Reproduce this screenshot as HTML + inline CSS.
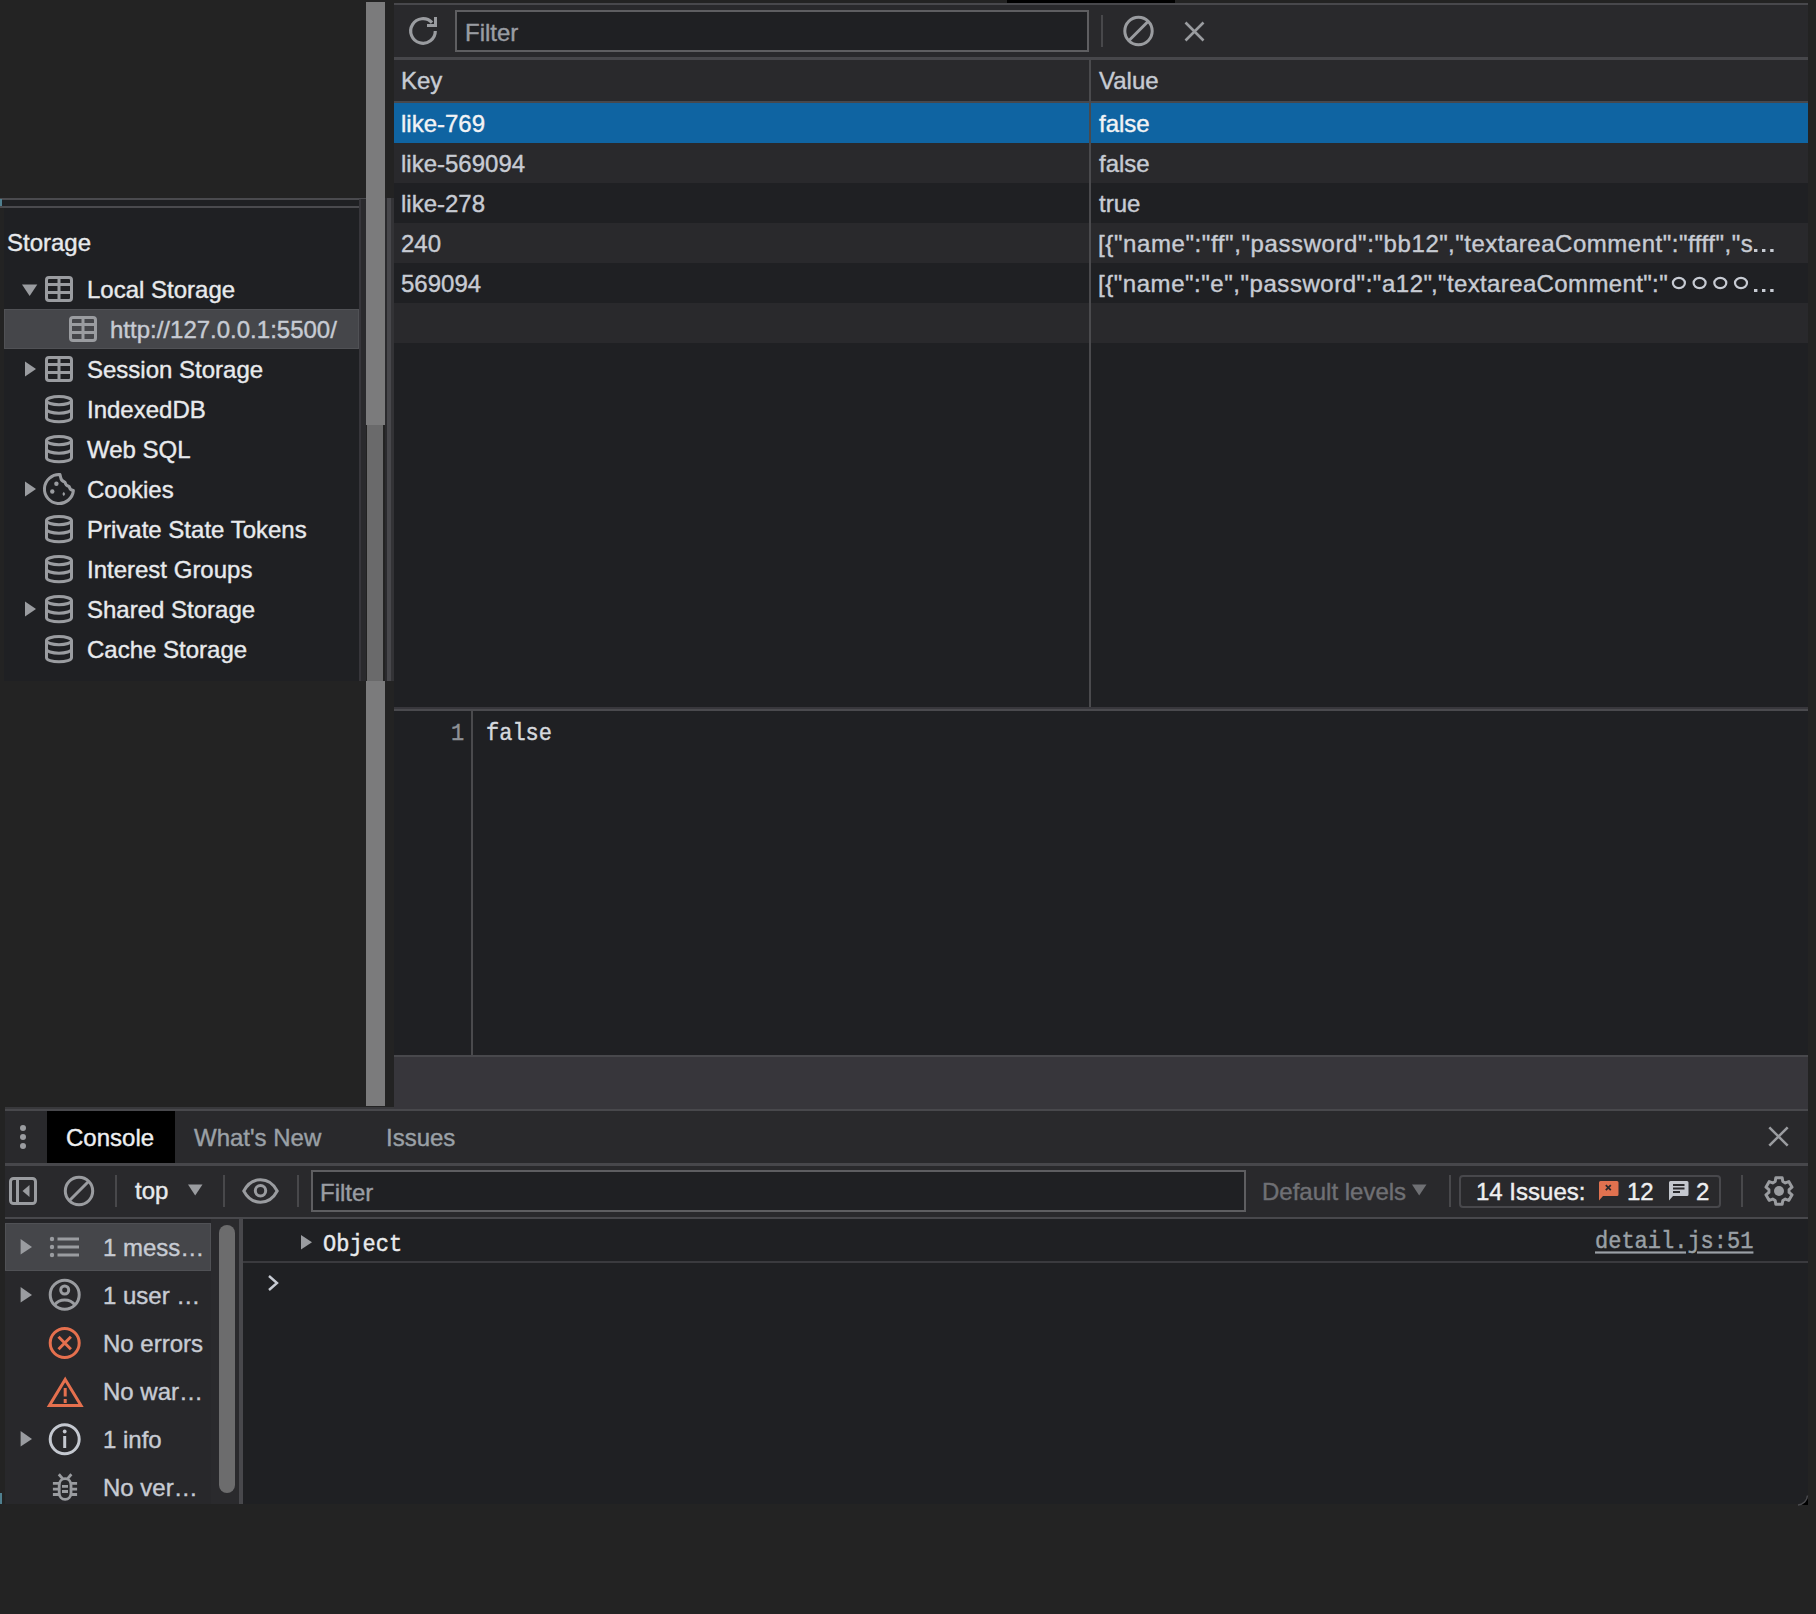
<!DOCTYPE html>
<html><head><meta charset="utf-8">
<style>
*{margin:0;padding:0;box-sizing:border-box}
html,body{width:1816px;height:1614px;overflow:hidden;background:#232323}
body{position:relative;font-family:"Liberation Sans",sans-serif;font-size:24px;color:#c7cbd3}
.a{position:absolute}
.mono{font-family:"Liberation Mono",monospace}
.t{position:absolute;white-space:pre;line-height:28px;margin-top:1px;-webkit-text-stroke:0.4px currentColor}
.mono{margin-top:0;transform:scaleY(1.1);transform-origin:0 18px}
svg{position:absolute;overflow:visible}
</style></head><body>

<!-- ===== top-left storage sidebar ===== -->
<div class="a" style="left:0;top:198px;width:366px;height:2px;background:#4a4a4e"></div>
<div class="a" style="left:0;top:200px;width:359px;height:6px;background:#1f2023"></div>
<div class="a" style="left:0;top:199px;width:2px;height:8px;background:#4f7f8f"></div>
<div class="a" style="left:0;top:206px;width:359px;height:2px;background:#4a4a4e"></div>
<div class="a" style="left:4px;top:208px;width:355px;height:473px;background:#1f2023"></div>
<!-- sidebar right strip -->
<div class="a" style="left:359px;top:199px;width:7px;height:482px;background:#2a2a2d"></div>
<div class="a" style="left:359px;top:199px;width:2px;height:482px;background:#37363b"></div>
<div class="a" style="left:385px;top:198px;width:9px;height:483px;background:#2a2a2d"></div>
<div class="a" style="left:387px;top:198px;width:4px;height:483px;background:#47474b"></div>
<div class="a" style="left:391px;top:198px;width:3px;height:483px;background:#333336"></div>

<!-- scrollbar -->
<div class="a" style="left:366px;top:2px;width:19px;height:423px;background:#7b7b7c"></div>
<div class="a" style="left:367px;top:425px;width:16px;height:256px;background:#6a6a6b"></div>
<div class="a" style="left:366px;top:681px;width:19px;height:425px;background:#7b7b7c"></div>

<div class="t" style="left:7px;top:228px;color:#e8eaed">Storage</div>

<div class="a" style="left:4px;top:309px;width:355px;height:40px;background:#45464a;box-shadow:inset 0 0 0 1px #505155"></div>
<svg style="left:0;top:0" width="1" height="1"><path d="M22 284.5L37.3 284.5L29.65 296Z" fill="#9a9ca0"/></svg>
<svg style="left:45px;top:276px" width="28" height="26" viewBox="0 0 28 26"><rect x="1.5" y="1.5" width="25" height="23" rx="2.5" fill="none" stroke="#9a9ca0" stroke-width="3"/><path d="M14 2V24M2 8.6H26M2 16.6H26" stroke="#9a9ca0" stroke-width="3"/></svg>
<div class="t" style="left:87px;top:275px;color:#e8eaed">Local Storage</div>
<svg style="left:69px;top:316px" width="28" height="26" viewBox="0 0 28 26"><rect x="1.5" y="1.5" width="25" height="23" rx="2.5" fill="none" stroke="#9a9ca0" stroke-width="3"/><path d="M14 2V24M2 8.6H26M2 16.6H26" stroke="#9a9ca0" stroke-width="3"/></svg>
<div class="t" style="left:110px;top:315px;color:#c7cbd3">http://127.0.0.1:5500/</div>
<svg style="left:0;top:0" width="1" height="1"><path d="M25 361.5L36 369.0L25 376.5Z" fill="#9a9ca0"/></svg>
<svg style="left:45px;top:356px" width="28" height="26" viewBox="0 0 28 26"><rect x="1.5" y="1.5" width="25" height="23" rx="2.5" fill="none" stroke="#9a9ca0" stroke-width="3"/><path d="M14 2V24M2 8.6H26M2 16.6H26" stroke="#9a9ca0" stroke-width="3"/></svg>
<div class="t" style="left:87px;top:355px;color:#e8eaed">Session Storage</div>
<svg style="left:45px;top:395px" width="28" height="28" viewBox="0 0 28 28"><ellipse cx="14" cy="5.6" rx="12.5" ry="4.1" fill="none" stroke="#9a9ca0" stroke-width="3"/><path d="M1.5 5.6V22.7A12.5 4.1 0 0 0 26.5 22.7V5.6M1.5 14.1A12.5 4.1 0 0 0 26.5 14.1" fill="none" stroke="#9a9ca0" stroke-width="3"/></svg>
<div class="t" style="left:87px;top:395px;color:#e8eaed">IndexedDB</div>
<svg style="left:45px;top:435px" width="28" height="28" viewBox="0 0 28 28"><ellipse cx="14" cy="5.6" rx="12.5" ry="4.1" fill="none" stroke="#9a9ca0" stroke-width="3"/><path d="M1.5 5.6V22.7A12.5 4.1 0 0 0 26.5 22.7V5.6M1.5 14.1A12.5 4.1 0 0 0 26.5 14.1" fill="none" stroke="#9a9ca0" stroke-width="3"/></svg>
<div class="t" style="left:87px;top:435px;color:#e8eaed">Web SQL</div>
<svg style="left:0;top:0" width="1" height="1"><path d="M25 481.5L36 489.0L25 496.5Z" fill="#9a9ca0"/></svg>
<svg style="left:43px;top:473px" width="32" height="32" viewBox="0 0 32 32"><path d="M17 1.6A14.5 14.5 0 1 0 30.4 17.5C28.2 17.2 26.6 15.6 26.2 13.4C24 13 22.3 11.3 22 9.1C19.7 8.6 17.9 6.6 17.6 4.1Z" fill="none" stroke="#9a9ca0" stroke-width="3" stroke-linejoin="round"/><circle cx="13.4" cy="10.7" r="2.2" fill="#9a9ca0"/><circle cx="9.3" cy="18.5" r="2.2" fill="#9a9ca0"/><path d="M20.8 18.7L22.2 21L20.8 23.3L19.4 21Z" fill="#9a9ca0"/></svg>
<div class="t" style="left:87px;top:475px;color:#e8eaed">Cookies</div>
<svg style="left:45px;top:515px" width="28" height="28" viewBox="0 0 28 28"><ellipse cx="14" cy="5.6" rx="12.5" ry="4.1" fill="none" stroke="#9a9ca0" stroke-width="3"/><path d="M1.5 5.6V22.7A12.5 4.1 0 0 0 26.5 22.7V5.6M1.5 14.1A12.5 4.1 0 0 0 26.5 14.1" fill="none" stroke="#9a9ca0" stroke-width="3"/></svg>
<div class="t" style="left:87px;top:515px;color:#e8eaed">Private State Tokens</div>
<svg style="left:45px;top:555px" width="28" height="28" viewBox="0 0 28 28"><ellipse cx="14" cy="5.6" rx="12.5" ry="4.1" fill="none" stroke="#9a9ca0" stroke-width="3"/><path d="M1.5 5.6V22.7A12.5 4.1 0 0 0 26.5 22.7V5.6M1.5 14.1A12.5 4.1 0 0 0 26.5 14.1" fill="none" stroke="#9a9ca0" stroke-width="3"/></svg>
<div class="t" style="left:87px;top:555px;color:#e8eaed">Interest Groups</div>
<svg style="left:0;top:0" width="1" height="1"><path d="M25 601.5L36 609.0L25 616.5Z" fill="#9a9ca0"/></svg>
<svg style="left:45px;top:595px" width="28" height="28" viewBox="0 0 28 28"><ellipse cx="14" cy="5.6" rx="12.5" ry="4.1" fill="none" stroke="#9a9ca0" stroke-width="3"/><path d="M1.5 5.6V22.7A12.5 4.1 0 0 0 26.5 22.7V5.6M1.5 14.1A12.5 4.1 0 0 0 26.5 14.1" fill="none" stroke="#9a9ca0" stroke-width="3"/></svg>
<div class="t" style="left:87px;top:595px;color:#e8eaed">Shared Storage</div>
<svg style="left:45px;top:635px" width="28" height="28" viewBox="0 0 28 28"><ellipse cx="14" cy="5.6" rx="12.5" ry="4.1" fill="none" stroke="#9a9ca0" stroke-width="3"/><path d="M1.5 5.6V22.7A12.5 4.1 0 0 0 26.5 22.7V5.6M1.5 14.1A12.5 4.1 0 0 0 26.5 14.1" fill="none" stroke="#9a9ca0" stroke-width="3"/></svg>
<div class="t" style="left:87px;top:635px;color:#e8eaed">Cache Storage</div>

<!-- ===== main panel ===== -->
<div class="a" style="left:1007px;top:0;width:168px;height:3px;background:#000"></div>
<div class="a" style="left:394px;top:3px;width:1414px;height:2px;background:#48484c"></div>
<div class="a" style="left:394px;top:5px;width:1414px;height:52px;background:#29292c"></div>
<div class="a" style="left:394px;top:57px;width:1414px;height:3px;background:#47474b"></div>
<div class="a" style="left:394px;top:60px;width:1414px;height:41px;background:#29292c"></div>
<div class="a" style="left:394px;top:101px;width:1414px;height:2px;background:#48484c"></div>

<div class="a" style="left:394px;top:103px;width:1414px;height:604px;background:#1f2023"></div>
<div class="a" style="left:394px;top:103px;width:1414px;height:40px;background:#0f64a2"></div>
<div class="t" style="left:401px;top:109px;color:#f2f3f5">like-769</div>
<div class="t" style="left:1099px;top:109px;color:#f2f3f5">false</div>
<div class="a" style="left:394px;top:143px;width:1414px;height:40px;background:#29292c"></div>
<div class="t" style="left:401px;top:149px;color:#c7cbd3">like-569094</div>
<div class="t" style="left:1099px;top:149px;color:#c7cbd3">false</div>
<div class="a" style="left:394px;top:183px;width:1414px;height:40px;background:#1f2023"></div>
<div class="t" style="left:401px;top:189px;color:#c7cbd3">like-278</div>
<div class="t" style="left:1099px;top:189px;color:#c7cbd3">true</div>
<div class="a" style="left:394px;top:223px;width:1414px;height:40px;background:#29292c"></div>
<div class="t" style="left:401px;top:229px;color:#c7cbd3">240</div>
<div class="t" style="left:1098px;top:229px;color:#c7cbd3;letter-spacing:0.6px">[{"name":"ff","password":"bb12"</div><div class="t" style="left:1448px;top:229px;color:#c7cbd3;letter-spacing:0.52px">,"textareaComment":"ffff","s</div><svg style="left:0;top:0" width="1" height="1"><path d="M1754 249h3.4v3h-3.4zM1762 249h3.4v3h-3.4zM1770.2 249h3.4v3h-3.4z" fill="#c7cbd3"/></svg>
<div class="a" style="left:394px;top:263px;width:1414px;height:40px;background:#1f2023"></div>
<div class="t" style="left:401px;top:269px;color:#c7cbd3">569094</div>
<div class="t" style="left:1098px;top:269px;color:#c7cbd3;letter-spacing:0.54px">[{"name":"e","password":"a12"</div><div class="t" style="left:1431px;top:269px;color:#c7cbd3;letter-spacing:0.37px">,"textareaComment":"</div><svg style="left:0;top:0" width="1" height="1"><g fill="none" stroke="#c7cbd3" stroke-width="2.2"><ellipse cx="1678.9" cy="283" rx="6" ry="5.1"/><ellipse cx="1699.6" cy="283" rx="6" ry="5.1"/><ellipse cx="1720.3" cy="283" rx="6" ry="5.1"/><ellipse cx="1741" cy="283" rx="6" ry="5.1"/></g><path d="M1754 289h3.4v3h-3.4zM1762 289h3.4v3h-3.4zM1770.2 289h3.4v3h-3.4z" fill="#c7cbd3"/></svg>
<div class="a" style="left:394px;top:303px;width:1414px;height:40px;background:#29292c"></div>
<div class="t" style="left:401px;top:66px">Key</div>
<div class="t" style="left:1099px;top:66px">Value</div>

<div class="a" style="left:1089px;top:60px;width:2px;height:647px;background:#4a4a4d"></div>
<div class="a" style="left:394px;top:707px;width:1414px;height:2px;background:#38373c"></div>
<div class="a" style="left:394px;top:709px;width:1414px;height:2px;background:#4a4a4e"></div>
<div class="a" style="left:394px;top:711px;width:1414px;height:344px;background:#1f2023"></div>
<div class="a" style="left:471px;top:711px;width:2px;height:344px;background:#4a4a4d"></div>
<div class="a" style="left:394px;top:1055px;width:1414px;height:2px;background:#48484c"></div>
<div class="a" style="left:394px;top:1057px;width:1414px;height:52px;background:#37363b"></div>

<div class="t mono" style="left:451px;top:721px;font-size:22px;color:#8e9196">1</div>
<div class="t mono" style="left:486px;top:721px;font-size:22px;color:#d6d9de">false</div>

<svg style="left:405px;top:13px" width="36" height="36" viewBox="0 0 36 36"><path d="M30.3 18A12.3 12.3 0 1 1 27 9.6" fill="none" stroke="#9a9ca0" stroke-width="3.2"/><path d="M30.5 4V12.6H22" fill="none" stroke="#9a9ca0" stroke-width="3"/></svg>
<div class="a" style="left:455px;top:10px;width:634px;height:42px;background:#1f2023;border:2px solid #5e5e61"></div>
<div class="t" style="left:465px;top:18px;color:#9a9da3">Filter</div>
<div class="a" style="left:1101px;top:15px;width:2px;height:32px;background:#48484b"></div>
<svg style="left:1122px;top:15px" width="33" height="33" viewBox="0 0 33 33"><circle cx="16.5" cy="16" r="13.7" fill="none" stroke="#9a9ca0" stroke-width="3"/><path d="M7 25.5L26 6.5" stroke="#9a9ca0" stroke-width="3"/></svg>
<svg style="left:1182px;top:19px" width="25" height="25" viewBox="0 0 25 25"><path d="M3.5 3.5L21.5 21.5M21.5 3.5L3.5 21.5" stroke="#9a9ca0" stroke-width="2.6"/></svg>

<!-- ===== drawer ===== -->
<div class="a" style="left:5px;top:1107px;width:389px;height:2px;background:#38383b"></div>
<div class="a" style="left:5px;top:1109px;width:1803px;height:2px;background:#48484c"></div>
<div class="a" style="left:5px;top:1111px;width:1803px;height:52px;background:#29292c"></div>
<div class="a" style="left:47px;top:1111px;width:128px;height:52px;background:#000"></div>
<div class="a" style="left:5px;top:1163px;width:1803px;height:3px;background:#47474b"></div>
<div class="a" style="left:5px;top:1166px;width:1803px;height:51px;background:#29292c"></div>
<div class="a" style="left:5px;top:1217px;width:1803px;height:2px;background:#48484c"></div>
<div class="a" style="left:5px;top:1219px;width:206px;height:285px;background:#28282b"></div>
<div class="a" style="left:5px;top:1219px;width:206px;height:4px;background:#232326"></div>
<div class="a" style="left:5px;top:1223px;width:206px;height:48px;background:#45464a;box-shadow:inset 0 0 0 1px #505155"></div>
<div class="a" style="left:211px;top:1219px;width:28px;height:285px;background:#2a2a2d"></div>
<div class="a" style="left:219px;top:1225px;width:16px;height:268px;border-radius:8px;background:#6c6c6d"></div>
<div class="a" style="left:239px;top:1219px;width:4px;height:285px;background:#48484c"></div>
<div class="a" style="left:243px;top:1219px;width:1565px;height:285px;background:#1f2023"></div>
<div class="a" style="left:243px;top:1261px;width:1565px;height:2px;background:#3a3a3e"></div>

<svg style="left:0;top:0" width="1" height="1"><circle cx="23" cy="1128" r="3" fill="#9a9ca0"/></svg>
<svg style="left:0;top:0" width="1" height="1"><circle cx="23" cy="1137" r="3" fill="#9a9ca0"/></svg>
<svg style="left:0;top:0" width="1" height="1"><circle cx="23" cy="1146" r="3" fill="#9a9ca0"/></svg>
<div class="t" style="left:66px;top:1123px;color:#eeeff1">Console</div>
<div class="t" style="left:194px;top:1123px;color:#9aa0a6">What's New</div>
<div class="t" style="left:386px;top:1123px;color:#9aa0a6">Issues</div>
<svg style="left:1766px;top:1124px" width="25" height="25" viewBox="0 0 25 25"><path d="M3.3 3.3L21.7 21.7M21.7 3.3L3.3 21.7" stroke="#9a9ca0" stroke-width="2.6"/></svg>
<svg style="left:9px;top:1177px" width="28" height="28" viewBox="0 0 28 28"><rect x="1.5" y="1.5" width="25" height="25" rx="3" fill="none" stroke="#9a9ca0" stroke-width="3"/><path d="M8.5 2V26" stroke="#9a9ca0" stroke-width="3"/><path d="M20.5 8V20L13.5 14Z" fill="#9a9ca0"/></svg>
<svg style="left:63px;top:1175px" width="33" height="33" viewBox="0 0 33 33"><circle cx="16" cy="16" r="13.7" fill="none" stroke="#9a9ca0" stroke-width="3"/><path d="M6.5 25.5L25.5 6.5" stroke="#9a9ca0" stroke-width="3"/></svg>
<div class="a" style="left:115px;top:1175px;width:2px;height:32px;background:#48484b"></div>
<div class="t" style="left:135px;top:1176px;color:#e8eaed">top</div>
<svg style="left:0;top:0" width="1" height="1"><path d="M188 1184.5H202.5L195.2 1195.5Z" fill="#9a9ca0"/></svg>
<div class="a" style="left:223px;top:1175px;width:2px;height:32px;background:#48484b"></div>
<svg style="left:242px;top:1178px" width="38" height="26" viewBox="0 0 38 26"><path d="M1.8 13C5.5 6 11.5 1.8 18.5 1.8S31.5 6 35.2 13C31.5 20 25.5 24.2 18.5 24.2S5.5 20 1.8 13Z" fill="none" stroke="#9a9ca0" stroke-width="3"/><circle cx="18.5" cy="12.8" r="5.2" fill="none" stroke="#9a9ca0" stroke-width="3"/></svg>
<div class="a" style="left:297px;top:1175px;width:2px;height:32px;background:#48484b"></div>
<div class="a" style="left:311px;top:1170px;width:935px;height:42px;background:#1f2023;border:2px solid #5e5e61"></div>
<div class="t" style="left:320px;top:1178px;color:#9a9da3">Filter</div>
<div class="t" style="left:1262px;top:1177px;color:#6f7074">Default levels</div>
<svg style="left:0;top:0" width="1" height="1"><path d="M1412 1184.5H1426.5L1419.2 1195.5Z" fill="#6f7074"/></svg>
<div class="a" style="left:1449px;top:1175px;width:2px;height:32px;background:#48484b"></div>
<div class="a" style="left:1459px;top:1175px;width:262px;height:33px;border:2px solid #48484c;border-radius:4px"></div>
<div class="t" style="left:1476px;top:1177px;color:#eeeff1">14 Issues:</div>
<svg style="left:1598px;top:1180px" width="22" height="22" viewBox="0 0 22 22"><path d="M1 2.5A1.5 1.5 0 0 1 2.5 1H19A1.5 1.5 0 0 1 20.5 2.5V14.5A1.5 1.5 0 0 1 19 16H5L1 20.5Z" fill="#e0714f"/><path d="M7.8 5.2L12.8 10.2M12.8 5.2L7.8 10.2" stroke="#29292c" stroke-width="1.8"/></svg>
<div class="t" style="left:1627px;top:1177px;color:#eeeff1">12</div>
<svg style="left:1668px;top:1180px" width="22" height="22" viewBox="0 0 22 22"><path d="M1 2.5A1.5 1.5 0 0 1 2.5 1H19A1.5 1.5 0 0 1 20.5 2.5V14.5A1.5 1.5 0 0 1 19 16H5L1 20.5Z" fill="#c4c7ce"/><path d="M5 5H16.5M5 8.5H16.5M5 12H12" stroke="#29292c" stroke-width="1.8"/></svg>
<div class="t" style="left:1696px;top:1177px;color:#eeeff1">2</div>
<div class="a" style="left:1741px;top:1175px;width:2px;height:32px;background:#48484b"></div>
<svg style="left:1763px;top:1175px" width="32" height="32" viewBox="0 0 32 32"><path d="M12.18 6.54L12.83 2.78L19.17 2.78L19.82 6.54L22.28 7.96L25.87 6.64L29.04 12.14L26.10 14.58L26.10 17.42L29.04 19.86L25.87 25.36L22.28 24.04L19.82 25.46L19.17 29.22L12.83 29.22L12.18 25.46L9.72 24.04L6.13 25.36L2.96 19.86L5.90 17.42L5.90 14.58L2.96 12.14L6.13 6.64L9.72 7.96Z" fill="none" stroke="#9a9ca0" stroke-width="3" stroke-linejoin="round"/><circle cx="16" cy="16" r="5" fill="#9a9ca0"/></svg>
<svg style="left:0;top:0" width="1" height="1"><path d="M20.6 1239L32 1247L20.6 1254.5Z" fill="#9a9ca0"/></svg>
<div class="t" style="left:103px;top:1233px;color:#c7cbd3">1 mess…</div>
<svg style="left:0;top:0" width="1" height="1"><path d="M20.6 1287L32 1295L20.6 1302.5Z" fill="#9a9ca0"/></svg>
<div class="t" style="left:103px;top:1281px;color:#c7cbd3">1 user …</div>
<div class="t" style="left:103px;top:1329px;color:#c7cbd3">No errors</div>
<div class="t" style="left:103px;top:1377px;color:#c7cbd3">No war…</div>
<svg style="left:0;top:0" width="1" height="1"><path d="M20.6 1431L32 1439L20.6 1446.5Z" fill="#9a9ca0"/></svg>
<div class="t" style="left:103px;top:1425px;color:#c7cbd3">1 info</div>
<div class="t" style="left:103px;top:1473px;color:#c7cbd3">No ver…</div>
<svg style="left:48px;top:1236px" width="34" height="22" viewBox="0 0 34 22"><circle cx="4" cy="3" r="2.2" fill="#9a9ca0"/><circle cx="4" cy="11" r="2.2" fill="#9a9ca0"/><circle cx="4" cy="19" r="2.2" fill="#9a9ca0"/><path d="M9.5 3H31M9.5 11H31M9.5 19H31" stroke="#9a9ca0" stroke-width="3"/></svg>
<svg style="left:48px;top:1278px" width="34" height="34" viewBox="0 0 34 34"><circle cx="16.7" cy="16.8" r="14.5" fill="none" stroke="#9a9ca0" stroke-width="3"/><circle cx="16.7" cy="12" r="4" fill="none" stroke="#9a9ca0" stroke-width="3"/><path d="M6.5 27C9 23.5 12.5 22 16.7 22S24.4 23.5 27 27" fill="none" stroke="#9a9ca0" stroke-width="3"/></svg>
<svg style="left:48px;top:1326px" width="34" height="34" viewBox="0 0 34 34"><circle cx="16.7" cy="17" r="14.5" fill="none" stroke="#e5704e" stroke-width="3"/><path d="M10.5 10.8L22.9 23.2M22.9 10.8L10.5 23.2" stroke="#e5704e" stroke-width="3"/></svg>
<svg style="left:46px;top:1376px" width="40" height="34" viewBox="0 0 40 34"><path d="M19.2 3.5L35 29.5H3.4Z" fill="none" stroke="#e5704e" stroke-width="3" stroke-linejoin="miter"/><path d="M19.2 12V20.5M19.2 23V27" stroke="#e5704e" stroke-width="3"/></svg>
<svg style="left:48px;top:1422px" width="34" height="34" viewBox="0 0 34 34"><circle cx="16.7" cy="17.2" r="14.5" fill="none" stroke="#c4c8d0" stroke-width="3"/><path d="M16.7 14V26" stroke="#c4c8d0" stroke-width="3"/><circle cx="16.7" cy="9.5" r="1.9" fill="#c4c8d0"/></svg>
<svg style="left:0;top:0" width="1" height="1"><path d="M58.8 1474.3L62.6 1478.6M71.4 1474.3L67.6 1478.6" stroke="#9a9ca0" stroke-width="2.8"/><path d="M65.1 1478.7C61.5 1478.7 59.2 1481.5 59.2 1485.5V1493C59.2 1496.8 61.8 1499.4 65.1 1499.4S71 1496.8 71 1493V1485.5C71 1481.5 68.7 1478.7 65.1 1478.7Z" fill="none" stroke="#9a9ca0" stroke-width="2.8"/><path d="M52.9 1483.4H59M52.9 1489.1H59M52.9 1494.5H59M71.2 1483.4H77.1M71.2 1489.1H77.1M71.2 1494.5H77.1M62 1486.4H68M62 1491.5H68" stroke="#9a9ca0" stroke-width="2.8"/></svg>
<svg style="left:0;top:0" width="1" height="1"><path d="M301 1235L312 1242.2L301 1249.5Z" fill="#9a9ca0"/></svg>
<div class="t mono" style="left:323px;top:1232px;font-size:22px;color:#e8eaed">Object</div>
<div class="t mono" style="left:1595px;top:1229px;font-size:22px;color:#9aa0a6;text-decoration:underline;text-underline-offset:3px">detail.js:51</div>
<svg style="left:0;top:0" width="1" height="1"><path d="M269 1276L277 1283L269 1290" fill="none" stroke="#c7cbd3" stroke-width="2.4"/></svg>

<div class="a" style="left:0;top:1493px;width:2px;height:11px;background:#4f7f8f"></div>
<svg style="left:0;top:0" width="1" height="1"><path d="M1808 1495V1505H1798A10 10 0 0 0 1808 1495Z" fill="#000"/><path d="M1807.5 1495.5A10 10 0 0 1 1798 1505" fill="none" stroke="#4a4a4e" stroke-width="1.5"/></svg>
</body></html>
